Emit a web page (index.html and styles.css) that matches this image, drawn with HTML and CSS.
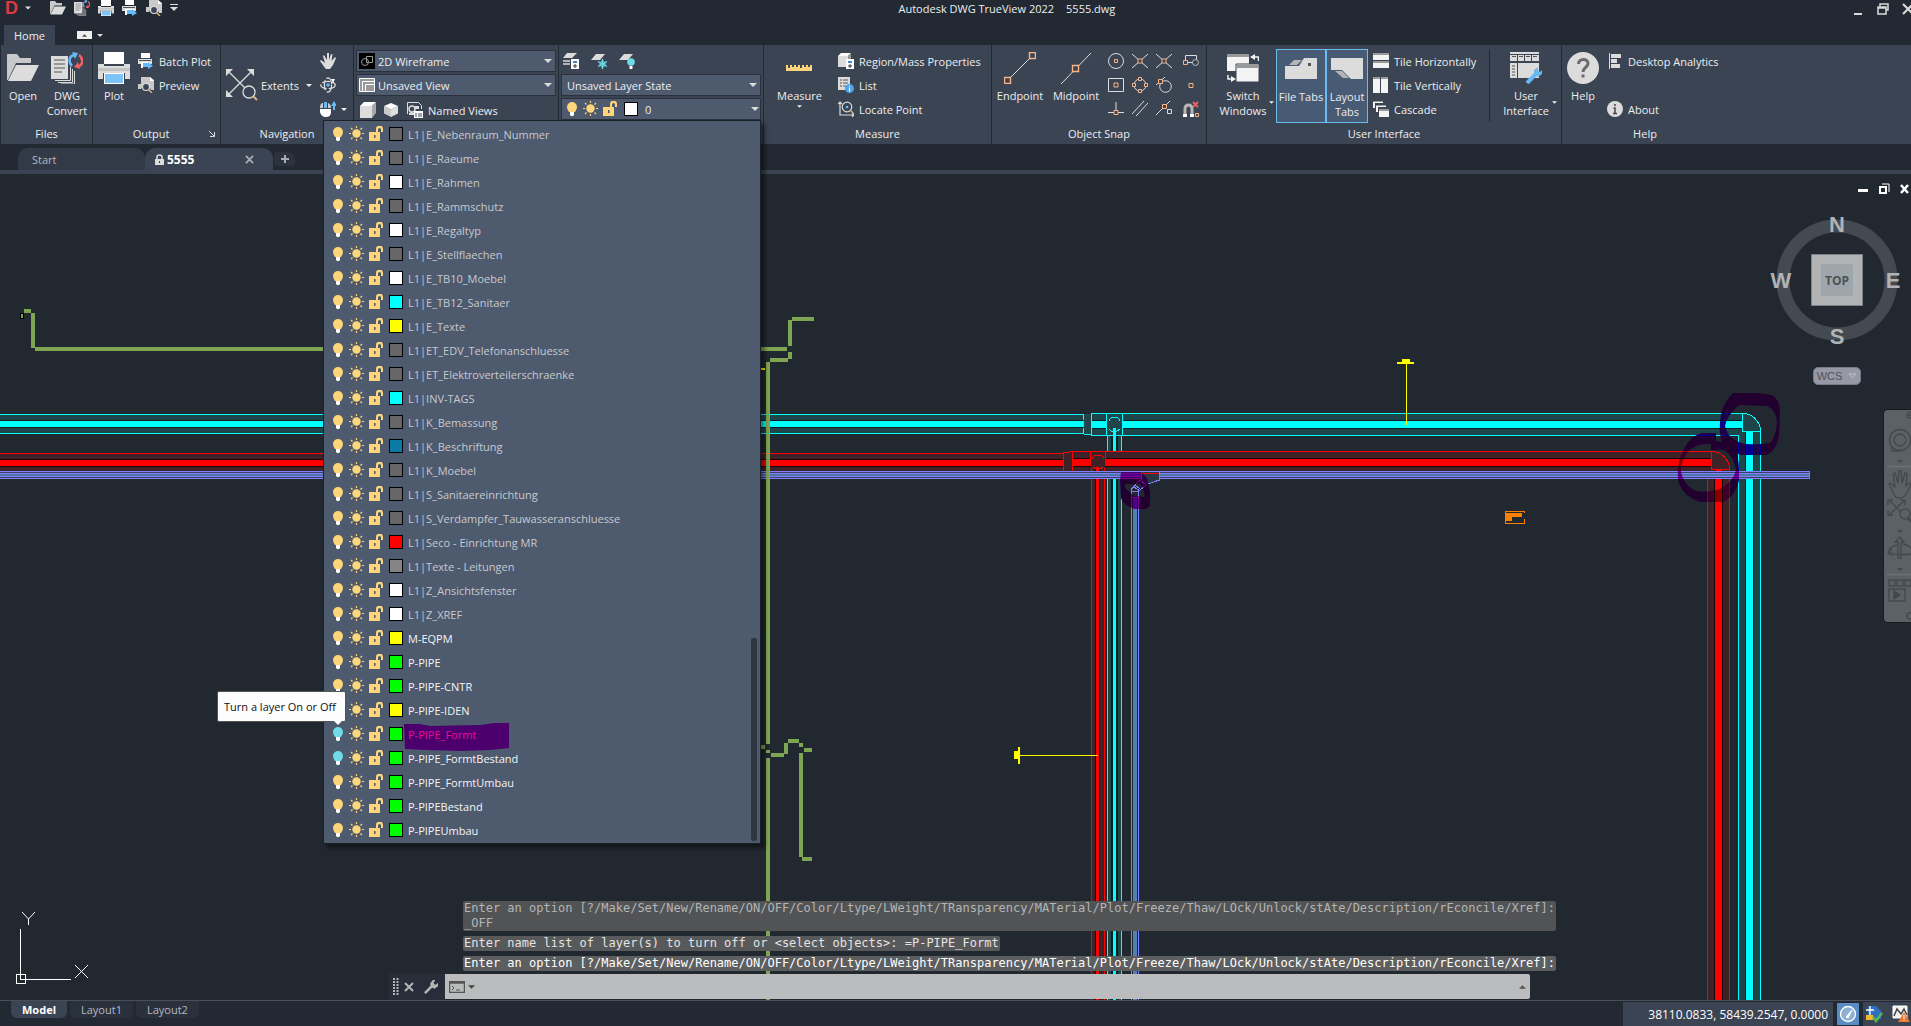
FILE: index.html
```html
<!DOCTYPE html>
<html lang="en">
<head>
<meta charset="utf-8">
<title>Autodesk DWG TrueView 2022 - 5555.dwg</title>
<link rel="stylesheet" href="styles.css">
</head>
<body>
<svg class="defs" aria-hidden="true">
  <symbol id="caret" viewBox="0 0 8 4"><path d="M0 0H8L4 4Z" fill="currentColor"/></symbol>
  <symbol id="bulb" viewBox="0 0 10 14"><path d="M5 0a5 5 0 0 1 5 5c0 2-1 3-2 5H2C1 8 0 7 0 5a5 5 0 0 1 5-5Z" fill="#ffd57b"/><path d="M3 10h4v3l-1 1H4l-1-1Z" fill="#fff"/></symbol>
  <symbol id="bulb-off" viewBox="0 0 10 14"><path d="M5 0a5 5 0 0 1 5 5c0 2-1 3-2 5H2C1 8 0 7 0 5a5 5 0 0 1 5-5Z" fill="#70dcea"/><path d="M3 10h4v3l-1 1H4l-1-1Z" fill="#fff"/></symbol>
  <symbol id="sun" viewBox="0 0 15 15"><circle cx="7.5" cy="7.5" r="4.2" fill="#ffd57b"/><path d="M7.5 0v2M7.5 13v2M0 7.500h2M13 7.500h2M2 2l1.500 1.500M11.500 11.500L13 13M13 2l-1.500 1.500M2 13l1.500-1.500" stroke="#ffd57b" stroke-width="1.200"/></symbol>
  <symbol id="lock" viewBox="0 0 14 15"><path d="M0 6h7V3a3.500 3.500 0 0 1 7 0v3h-2V3.500a1.500 1.500 0 0 0-3 0V6h2v9H0Z" fill="#ffd57b"/><path d="M5 9h1.500v3H5Z" fill="#4e5a6e"/></symbol>
  <symbol id="on" viewBox="0 0 50 16"><use href="#bulb" x="0" y="1" width="10" height="14"/><use href="#sun" x="16" y="0" width="15" height="15"/><use href="#lock" x="36" y="0" width="14" height="15"/></symbol>
  <symbol id="off" viewBox="0 0 50 16"><use href="#bulb-off" x="0" y="1" width="10" height="14"/><use href="#sun" x="16" y="0" width="15" height="15"/><use href="#lock" x="36" y="0" width="14" height="15"/></symbol>
  <symbol id="folder" viewBox="0 0 32 28"><path d="M0 26V1q0-1 1-1h9l3 4h11v5H9L1 26Z" fill="#c9c9c9"/><path d="M9 11h23l-8 16H1Z" fill="#dcdcdc"/></symbol>
  <symbol id="convert" viewBox="0 0 32 32"><path d="M0 4h17v23H0Z" fill="#dcdcdc"/><path d="M3 8h11M3 12h11M3 16h11M3 20h8" stroke="#555" stroke-width="1"/><path d="M4 28.500h15.500V15M7 30.500h14.500V17M10 32h13.500V19" fill="none" stroke="#dcdcdc" stroke-width="1"/><path d="M21 14C17 10 18 4 23 3" fill="none" stroke="#67b9f5" stroke-width="2.500"/><path d="M21 0l6 1-3 6Z" fill="#67b9f5"/><path d="M28 3c5 4 4 10-1 12" fill="none" stroke="#f2605f" stroke-width="2.500"/><path d="M29 17l-6-2 4-5Z" fill="#f2605f"/></symbol>
  <symbol id="printer" viewBox="0 0 32 32"><path d="M6 0h20v12H6Z" fill="#fff"/><path d="M0 12h6v2h20v-2h6v15h-5v-6H5v6H0Z" fill="#dcdcdc"/><path d="M0 16h32v3H0Z" fill="#c3c3c3"/><path d="M6 21h20v11H6Z" fill="#fff"/><path d="M7 22h18v9H7Z" fill="#7cc4f8"/></symbol>
  <symbol id="batch" viewBox="0 0 16 16"><path d="M3 0h9v5H3Z" fill="#fff"/><path d="M0 6h14v5H0Z" fill="#dcdcdc"/><path d="M1 7h12v1H1Z" fill="#555"/><path d="M3 9h9v2H5v4H3Z" fill="#fff"/><path d="M5 10h6v2h-1V9l5 4-5 3v-2H5Z" fill="#67b9f5"/></symbol>
  <symbol id="preview" viewBox="0 0 16 16"><path d="M3 0h9l4 3v10h-3l-3-6-4 0-3 5H0V7h3Z" fill="#c9c9c9"/><path d="M12 0l4 4h-4Z" fill="#fff"/><circle cx="8" cy="10" r="3.500" fill="#3b4453" stroke="#dcdcdc" stroke-width="1.200"/><path d="M10.500 12.500L14 16" stroke="#d9b27a" stroke-width="1.500"/></symbol>
  <symbol id="extents" viewBox="0 0 32 32"><path d="M2 2l24 24M26 2L2 26" stroke="#dcdcdc" stroke-width="1.300"/><path d="M0 0h7L0 7ZM28 0v7l-7-7ZM0 28v-7l7 7Z" fill="#dcdcdc"/><circle cx="23" cy="23" r="6" fill="#3b4453" stroke="#dcdcdc" stroke-width="1.300"/><path d="M27 27l4 4" stroke="#d9b27a" stroke-width="2"/></symbol>
  <symbol id="hand" viewBox="0 0 16 16"><path d="M5 15L0 8l1-1 4 3L3 3l1-1 3 5V0h2v7l2-6 1.500.5L11.500 8 15 4l1 1-3 7-3 4H6Z" fill="#dcdcdc"/></symbol>
  <symbol id="orbit" viewBox="0 0 16 16"><ellipse cx="8" cy="8" rx="7.200" ry="3.600" fill="none" stroke="#dcdcdc" stroke-width="1.300" stroke-dasharray="8 2"/><ellipse cx="8" cy="8" rx="3.600" ry="7.200" fill="none" stroke="#dcdcdc" stroke-width="1.300" stroke-dasharray="10 2"/><path d="M8 6v4M6 8h4" stroke="#67b9f5" stroke-width="1.300"/><path d="M11 2l4 0-2 4Z" fill="#fff"/></symbol>
  <symbol id="mouse" viewBox="0 0 16 16"><path d="M0 8h11v3q0 5-5 5T0 11Z" fill="#fff"/><path d="M0 7q0-5 3-5v5ZM8 2q3 1 3 5H8Z" fill="#c9c9c9"/><path d="M4 1h3v6H4Z" fill="#67b9f5"/><path d="M13 9V5h-2l3-5 3 5h-2v4Z" fill="#67b9f5"/></symbol>
  <symbol id="wire" viewBox="0 0 16 16"><path d="M0 0h16v16H0Z"/><circle cx="6" cy="9" r="3.500" fill="none" stroke="#999"/><path d="M7.500 3.500h6v6h-6Z" fill="none" stroke="#999"/></symbol>
  <symbol id="view" viewBox="0 0 16 14"><path d="M.5.5h15v13H.5Z" fill="#999" stroke="#fff"/><path d="M3.500 13V3.500H15M6.500 13V6.500H15" fill="none" stroke="#fff"/></symbol>
  <symbol id="cube" viewBox="0 0 16 16"><path d="M0 4h12v12H0Z" fill="#dcdcdc"/><path d="M0 4l4-4h12l-4 4Z" fill="#fff"/><path d="M12 4l4-4v11l-4 5Z" fill="#a9a9a9"/></symbol>
  <symbol id="iso" viewBox="0 0 14 14"><path d="M7 0l7 3-7 3.500L0 3Z" fill="#fff"/><path d="M0 3l7 3.500V14L0 10.500Z" fill="#c9c9c9"/><path d="M14 3L7 6.500V14l7-3.500Z" fill="#dfdfdf"/></symbol>
  <symbol id="named" viewBox="0 0 16 16"><path d="M.5 12V.5h11l3 3V7" fill="none" stroke="#dcdcdc"/><circle cx="5" cy="7" r="3" fill="none" stroke="#dcdcdc" stroke-width="1.500"/><path d="M2 11q3-2 5 0v2H2ZM8 4h4v3H8Z" fill="#dcdcdc"/><path d="M7 9h9v7H7Z" fill="#fff"/><path d="M8 12h2M11 12h4M8 14h2M11 14h4" stroke="#3b4453"/></symbol>
  <symbol id="lay1" viewBox="0 0 16 16"><path d="M4 0h10l-5 5H0Z" fill="#dcdcdc"/><path d="M0 8h7M0 11h7" stroke="#dcdcdc" stroke-width="1.500"/><path d="M8 6h8v10H8Z" fill="#fff"/><path d="M10 8h4v2h-4Z" fill="#3b86d0"/><path d="M12 11v4M10 13h4" stroke="#333"/></symbol>
  <symbol id="lay2" viewBox="0 0 16 16"><path d="M5 1h9L9 7H0Z" fill="#dcdcdc"/><path d="M11.500 6v10M7 8.500l9 5M16 8.500l-9 5" stroke="#70dcea" stroke-width="1.400"/><circle cx="11.500" cy="11" r="2.600" fill="none" stroke="#70dcea"/></symbol>
  <symbol id="lay3" viewBox="0 0 16 16"><path d="M5 1h9L9 7H0Z" fill="#dcdcdc"/><circle cx="12" cy="9" r="3.800" fill="#70dcea"/><path d="M10.500 13h3v3h-3Z" fill="#fff"/></symbol>
  <symbol id="ruler" viewBox="0 0 28 6"><path d="M0 0h2v3h2V0h2v2h2V0h2v2h2V0h2v3h2V0h2v2h2V0h2v2h2V0h2v6H0Z" fill="#ffd57b"/></symbol>
  <symbol id="region" viewBox="0 0 16 16"><path d="M0 3h10v11H0Z" fill="#dcdcdc"/><path d="M0 3l3-3h10l-3 3Z" fill="#fff"/><path d="M10 3l3-3v6h-3Z" fill="#999"/><path d="M8 6h8v10H8Z" fill="#fff"/><path d="M10 8h4v2h-4Z" fill="#3b86d0"/><path d="M12 11v4M10 13h4" stroke="#333"/></symbol>
  <symbol id="list" viewBox="0 0 16 16"><path d="M0 0h12v13H0Z" fill="#dcdcdc"/><path d="M2 3h2M5 3h5M2 6h2M5 6h5M2 9h2M5 9h3" stroke="#555"/><circle cx="11.500" cy="11.500" r="4.500" fill="#4da3e8"/><path d="M11.500 8.500v1M11.500 10.500v4" stroke="#fff" stroke-width="1.200"/></symbol>
  <symbol id="locate" viewBox="0 0 16 16"><path d="M2 1v13h14M0 3l2-2 2 2M14 12l2 2-2 2" fill="none" stroke="#dcdcdc" stroke-width="1.200"/><circle cx="9" cy="6" r="4.800" fill="none" stroke="#dcdcdc" stroke-width="1.200"/><circle cx="9" cy="6" r="1.300" fill="#67b9f5"/><path d="M12.500 9.500l3 3" stroke="#d9b27a" stroke-width="1.500"/></symbol>
  <symbol id="endp" viewBox="0 0 32 32"><path d="M4 28L28 4" stroke="#dcdcdc"/><path d="M.5 25.500h6v6h-6ZM25.500.5h6v6h-6Z" fill="#3b4453" stroke="#f9b487" stroke-width="1.400"/></symbol>
  <symbol id="midp" viewBox="0 0 32 32"><path d="M1 32L31 1" stroke="#dcdcdc"/><path d="M12.500 13.500h6v6h-6Z" fill="#3b4453" stroke="#f9b487" stroke-width="1.400"/></symbol>
  <symbol id="s1" viewBox="0 0 16 16"><circle cx="8" cy="8" r="7.500" fill="none" stroke="#dcdcdc"/><path d="M6.500 6.500h3v3h-3Z" fill="none" stroke="#f9b487"/></symbol>
  <symbol id="s2" viewBox="0 0 16 16"><path d="M0 1l16 14M16 1L0 15" stroke="#dcdcdc"/><path d="M6 6h4v4H6Z" fill="#3b4453" stroke="#f9b487"/></symbol>
  <symbol id="s4" viewBox="0 0 16 16"><path d="M2.500 7V2.500h11V7M4 9.500h6" fill="none" stroke="#dcdcdc"/><circle cx="12.500" cy="9.500" r="3" fill="none" stroke="#bbb"/><path d="M.5 7.500h4v4h-4Z" fill="#3b4453" stroke="#f9b487"/></symbol>
  <symbol id="s5" viewBox="0 0 16 16"><path d="M.5 1.500h15v13H.5Z" fill="none" stroke="#dcdcdc"/><path d="M6 6h4v4H6Z" fill="none" stroke="#f9b487"/></symbol>
  <symbol id="s6" viewBox="0 0 16 16"><circle cx="8" cy="8" r="6" fill="none" stroke="#dcdcdc"/><path d="M6.500.5h3v3h-3ZM6.500 12.500h3v3h-3ZM.5 6.500h3v3h-3ZM12.500 6.500h3v3h-3Z" fill="#3b4453" stroke="#f9b487"/></symbol>
  <symbol id="s7" viewBox="0 0 16 16"><circle cx="9.500" cy="9.500" r="5.800" fill="none" stroke="#dcdcdc"/><path d="M0 8L9 0" stroke="#dcdcdc"/><path d="M2.500 2.500h4v4h-4Z" fill="#3b4453" stroke="#f9b487"/></symbol>
  <symbol id="s8" viewBox="0 0 16 16"><path d="M6 6.500h4v4H6Z" fill="none" stroke="#f9b487"/></symbol>
  <symbol id="s9" viewBox="0 0 16 16"><path d="M8 1v9M0 11.500h16" stroke="#dcdcdc"/><path d="M6 9.500h4v4H6Z" fill="#3b4453" stroke="#f9b487"/></symbol>
  <symbol id="s10" viewBox="0 0 16 16"><path d="M0 13L12 0M4 15L16 2" stroke="#dcdcdc"/></symbol>
  <symbol id="s11" viewBox="0 0 16 16"><path d="M0 14L14 0" stroke="#dcdcdc"/><path d="M6.500 3.500h4v4h-4Z" fill="#3b4453" stroke="#f9b487"/><path d="M11.500 8.500h4v4h-4Z" fill="none" stroke="#dcdcdc"/></symbol>
  <symbol id="s12" viewBox="0 0 16 16"><path d="M2 15V8q0-4 3.500-4T9 8v7" fill="none" stroke="#b5b5b5" stroke-width="3"/><path d="M0 13h4v3H0ZM7 13h4v3H7Z" fill="#fff"/><path d="M10 1l5 5M15 1l-5 5" stroke="#f2605f" stroke-width="1.800"/><path d="M12.500 12.500h3v3h-3Z" fill="none" stroke="#f9b487"/></symbol>
  <symbol id="switch" viewBox="0 0 32 32"><path d="M0 2h22v17H0Z" fill="#f4f4f4"/><path d="M0 2h22v3H0Z" fill="#999"/><path d="M9 12h23v18H9Z" fill="#f4f4f4" stroke="#3b4453"/><path d="M10 13h22v3H10Z" fill="#999"/><path d="M31.500 9V5H27M1 23v4h4" fill="none" stroke="#f4f4f4" stroke-width="1.500"/><path d="M28 2v6l-5-3ZM4 24v6l5-3Z" fill="#f4f4f4"/></symbol>
  <symbol id="ftab" viewBox="0 0 32 21"><path d="M0 8h14l5-8h13v21H0Z" fill="#dcdcdc"/><path d="M4 7l5-5h8l-5 5Z" fill="#b5b5b5"/><path d="M23 5h3v3h-3Z" fill="#555"/></symbol>
  <symbol id="ltab" viewBox="0 0 32 21"><path d="M0 0h32v21H20L11 12H0Z" fill="#dcdcdc"/><path d="M4 13h7l7 7h-6Z" fill="#b5b5b5"/></symbol>
  <symbol id="tileh" viewBox="0 0 16 16"><path d="M0 0h16v7H0ZM0 8h16v7H0Z" fill="#f4f4f4"/><path d="M0 0h16v2H0ZM0 8h16v2H0Z" fill="#999"/></symbol>
  <symbol id="tilev" viewBox="0 0 16 16"><path d="M0 0h7v16H0ZM8 0h7v16H8Z" fill="#f4f4f4"/><path d="M0 0h7v2H0ZM8 0h7v2H8Z" fill="#999"/></symbol>
  <symbol id="casc" viewBox="0 0 16 16"><path d="M0 0h10v2H2v5H0ZM3 4h10v2H5v5H3Z" fill="#f4f4f4"/><path d="M0 0h10v1H0ZM3 4h10v1H3Z" fill="#999"/><path d="M6 8h10v8H6Z" fill="#f4f4f4"/><path d="M6 8h10v2H6Z" fill="#999"/></symbol>
  <symbol id="ui" viewBox="0 0 32 32"><path d="M0 0h29v2H0ZM0 3h29v6H0ZM0 11h7v15H0ZM8 11h21v15H8Z" fill="#dcdcdc"/><path d="M7.500 3v6M14.500 3v6M21.500 3v6" stroke="#3b4453"/><path d="M2 4.500h4M9 4.500h4M16 4.500h4M23 4.500h4M2 14h3M2 17h3M2 20h3M2 23h3" stroke="#555"/><path d="M17 31L27 21" stroke="#67b9f5" stroke-width="4"/><path d="M24 22v-4l4-3v4l2 1 2-2v4l-4 3Z" fill="#67b9f5"/></symbol>
  <symbol id="help" viewBox="0 0 32 32"><circle cx="16" cy="16" r="16" fill="#dcdcdc"/><path d="M11.500 12c0-6 9.500-6 9.500-.5 0 4-5 4-5 8.500M16 22.500v3" fill="none" stroke="#6a6a6a" stroke-width="3"/></symbol>
  <symbol id="desk" viewBox="0 0 16 16"><path d="M2.500 0v16" stroke="#dcdcdc"/><path d="M4 1h10v4H4ZM4 6h6v4H4ZM4 11h9v4H4Z" fill="#dcdcdc"/></symbol>
  <symbol id="about" viewBox="0 0 16 16"><circle cx="8" cy="8" r="8" fill="#dcdcdc"/><path d="M8 3v2M6.500 7H8v5M6 12.500h4" fill="none" stroke="#444" stroke-width="1.500"/></symbol>
  <symbol id="wrench" viewBox="0 0 16 16"><path d="M1 15L9 7" stroke="currentColor" stroke-width="3"/><path d="M8 8L7 4l3-4h3l-2 3 1 2 2 0 2-2v4l-4 3Z" fill="currentColor"/></symbol>
  <symbol id="x" viewBox="0 0 10 10"><path d="M1 1l8 8M9 1L1 9" stroke="currentColor" stroke-width="2"/></symbol>
</svg>

<header class="titlebar">
  <div class="quick">
    <button class="logo" aria-label="Application menu">D<svg width="6" height="4"><use href="#caret"/></svg></button>
    <button aria-label="Open"><svg width="16" height="14"><use href="#folder"/></svg></button>
    <button aria-label="DWG Convert"><svg width="16" height="16"><use href="#convert"/></svg></button>
    <button aria-label="Plot"><svg width="16" height="16"><use href="#printer"/></svg></button>
    <button aria-label="Batch Plot"><svg width="16" height="16"><use href="#batch"/></svg></button>
    <button aria-label="Plot Preview"><svg width="16" height="16"><use href="#preview"/></svg></button>
    <button class="more" aria-label="Customize"><svg width="8" height="8" viewBox="0 0 8 8"><path d="M0 0h8v1H0ZM0 3h8L4 7Z" fill="#dcdcdc"/></svg></button>
  </div>
  <p class="apptitle"><span>Autodesk DWG TrueView 2022</span><span>5555.dwg</span></p>
  <div class="winctl">
    <button aria-label="Minimize"><svg width="12" height="12" viewBox="0 0 12 12"><path d="M2 10h8v2H2Z" fill="#dcdcdc"/></svg></button>
    <button aria-label="Restore"><svg width="12" height="12" viewBox="0 0 12 12"><path d="M3 3V1h8v6H9M1 4h8v7H1ZM1 5h8" fill="none" stroke="#dcdcdc" stroke-width="1.500"/></svg></button>
    <button aria-label="Close"><svg width="12" height="12" viewBox="0 0 12 12"><path d="M1 1l10 10M11 1L1 11" stroke="#dcdcdc" stroke-width="2"/></svg></button>
  </div>
</header>

<nav class="tabrow">
  <button class="home">Home</button>
  <button class="mini" aria-label="Minimize ribbon"><svg width="5" height="3" viewBox="0 0 6 3"><path d="M0 3h6L3 0Z" fill="#444"/></svg></button>
  <svg width="6" height="3"><use href="#caret"/></svg>
</nav>

<section class="ribbon">
  <div class="panel p-files">
    <div class="body">
      <button class="big"><svg width="32" height="32" viewBox="0 -2 32 32"><use href="#folder" width="32" height="28"/></svg>Open</button>
      <button class="big"><svg width="32" height="32"><use href="#convert"/></svg>DWG<br>Convert</button>
    </div>
    <h2>Files</h2>
  </div>
  <div class="panel p-output">
    <div class="body">
      <button class="big"><svg width="32" height="32"><use href="#printer"/></svg>Plot</button>
      <div class="col">
        <button class="small"><svg width="16" height="16"><use href="#batch"/></svg>Batch Plot</button>
        <button class="small"><svg width="16" height="16"><use href="#preview"/></svg>Preview</button>
      </div>
    </div>
    <h2><span>Output</span><svg width="6" height="6" viewBox="0 0 6 6"><path d="M0 0l5 5M5.500 1v4.500H1" fill="none" stroke="#dcdcdc"/></svg></h2>
  </div>
  <div class="panel p-nav">
    <div class="body">
      <button class="ext"><svg width="32" height="32"><use href="#extents"/></svg>Extents<svg class="crt" width="6" height="3"><use href="#caret"/></svg></button>
      <div class="col end">
        <button class="small" aria-label="Pan"><svg width="16" height="16"><use href="#hand"/></svg></button>
        <button class="small" aria-label="Orbit"><svg width="16" height="16"><use href="#orbit"/></svg></button>
        <button class="small" aria-label="Mouse"><svg width="16" height="16"><use href="#mouse"/></svg><svg width="6" height="3"><use href="#caret"/></svg></button>
      </div>
    </div>
    <h2>Navigation</h2>
  </div>
  <div class="panel p-view">
    <div class="stack">
      <div class="combo"><svg width="16" height="16"><use href="#wire"/></svg><select aria-label="Visual style"><option>2D Wireframe</option></select><svg class="dd" width="8" height="4"><use href="#caret"/></svg></div>
      <div class="combo"><svg width="16" height="14"><use href="#view"/></svg><select aria-label="View"><option>Unsaved View</option></select><svg class="dd" width="8" height="4"><use href="#caret"/></svg></div>
      <div class="tools">
        <button aria-label="Top view"><svg width="16" height="16"><use href="#cube"/></svg></button>
        <button aria-label="Isometric view"><svg width="14" height="14"><use href="#iso"/></svg></button>
        <button class="small"><svg width="16" height="16"><use href="#named"/></svg>Named Views</button>
      </div>
    </div>
  </div>
  <div class="panel p-layers">
    <div class="stack">
      <div class="tools lay">
        <button aria-label="Layer properties"><svg width="16" height="16"><use href="#lay1"/></svg></button>
        <button aria-label="Layer freeze"><svg width="16" height="16"><use href="#lay2"/></svg></button>
        <button aria-label="Layer off"><svg width="16" height="16"><use href="#lay3"/></svg></button>
      </div>
      <div class="combo plain"><select aria-label="Layer state"><option>Unsaved Layer State</option></select><svg class="dd" width="8" height="4"><use href="#caret"/></svg></div>
      <div class="layerbox">
        <button class="combo current" aria-haspopup="listbox" aria-expanded="true"><svg width="50" height="16"><use href="#on"/></svg><i class="sw white"></i><span>0</span><svg class="dd" width="8" height="4"><use href="#caret"/></svg></button>
        <ul class="layers">
          <li><svg><use href="#on"/></svg><i class="sw"></i><span>L1|E_Nebenraum_Nummer</span></li>
          <li><svg><use href="#on"/></svg><i class="sw"></i><span>L1|E_Raeume</span></li>
          <li><svg><use href="#on"/></svg><i class="sw white"></i><span>L1|E_Rahmen</span></li>
          <li><svg><use href="#on"/></svg><i class="sw"></i><span>L1|E_Rammschutz</span></li>
          <li><svg><use href="#on"/></svg><i class="sw white"></i><span>L1|E_Regaltyp</span></li>
          <li><svg><use href="#on"/></svg><i class="sw"></i><span>L1|E_Stellflaechen</span></li>
          <li><svg><use href="#on"/></svg><i class="sw white"></i><span>L1|E_TB10_Moebel</span></li>
          <li><svg><use href="#on"/></svg><i class="sw cyan"></i><span>L1|E_TB12_Sanitaer</span></li>
          <li><svg><use href="#on"/></svg><i class="sw yellow"></i><span>L1|E_Texte</span></li>
          <li><svg><use href="#on"/></svg><i class="sw"></i><span>L1|ET_EDV_Telefonanschluesse</span></li>
          <li><svg><use href="#on"/></svg><i class="sw"></i><span>L1|ET_Elektroverteilerschraenke</span></li>
          <li><svg><use href="#on"/></svg><i class="sw cyan"></i><span>L1|INV-TAGS</span></li>
          <li><svg><use href="#on"/></svg><i class="sw"></i><span>L1|K_Bemassung</span></li>
          <li><svg><use href="#on"/></svg><i class="sw blue"></i><span>L1|K_Beschriftung</span></li>
          <li><svg><use href="#on"/></svg><i class="sw"></i><span>L1|K_Moebel</span></li>
          <li><svg><use href="#on"/></svg><i class="sw"></i><span>L1|S_Sanitaereinrichtung</span></li>
          <li><svg><use href="#on"/></svg><i class="sw"></i><span>L1|S_Verdampfer_Tauwasseranschluesse</span></li>
          <li><svg><use href="#on"/></svg><i class="sw red"></i><span>L1|Seco - Einrichtung MR</span></li>
          <li><svg><use href="#on"/></svg><i class="sw gray"></i><span>L1|Texte - Leitungen</span></li>
          <li><svg><use href="#on"/></svg><i class="sw white"></i><span>L1|Z_Ansichtsfenster</span></li>
          <li><svg><use href="#on"/></svg><i class="sw white"></i><span>L1|Z_XREF</span></li>
          <li class="own"><svg><use href="#on"/></svg><i class="sw yellow"></i><span>M-EQPM</span></li>
          <li class="own"><svg><use href="#on"/></svg><i class="sw green"></i><span>P-PIPE</span></li>
          <li class="own"><svg><use href="#on"/></svg><i class="sw green"></i><span>P-PIPE-CNTR</span></li>
          <li class="own"><svg><use href="#on"/></svg><i class="sw yellow"></i><span>P-PIPE-IDEN</span></li>
          <li class="own marked"><svg><use href="#off"/></svg><i class="sw green"></i><svg class="marker" viewBox="0 0 106 28"><path d="M0 1L16 1 26 3 77 2 90 0 105 0V25L86 27 56 28 22 27 1 26Z" fill="#4b006e"/></svg><span>P-PIPE_Formt</span><div class="tip" role="tooltip">Turn a layer On or Off</div></li>
          <li class="own"><svg><use href="#off"/></svg><i class="sw green"></i><span>P-PIPE_FormtBestand</span></li>
          <li class="own"><svg><use href="#on"/></svg><i class="sw green"></i><span>P-PIPE_FormtUmbau</span></li>
          <li class="own"><svg><use href="#on"/></svg><i class="sw green"></i><span>P-PIPEBestand</span></li>
          <li class="own"><svg><use href="#on"/></svg><i class="sw green"></i><span>P-PIPEUmbau</span></li>
        </ul>
      </div>
    </div>
  </div>
  <div class="panel p-measure">
    <div class="body">
      <button class="big"><svg width="28" height="32" viewBox="0 0 28 32"><use href="#ruler" y="13" width="28" height="6"/></svg>Measure<svg width="5" height="3"><use href="#caret"/></svg></button>
      <div class="col">
        <button class="small"><svg width="16" height="16"><use href="#region"/></svg>Region/Mass Properties</button>
        <button class="small"><svg width="16" height="16"><use href="#list"/></svg>List</button>
        <button class="small"><svg width="16" height="16"><use href="#locate"/></svg>Locate Point</button>
      </div>
    </div>
    <h2>Measure</h2>
  </div>
  <div class="panel p-snap">
    <div class="body">
      <button class="big"><svg width="32" height="32"><use href="#endp"/></svg>Endpoint</button>
      <button class="big"><svg width="32" height="32"><use href="#midp"/></svg>Midpoint</button>
      <div class="snaps">
        <button aria-label="Center"><svg><use href="#s1"/></svg></button>
        <button aria-label="Intersection"><svg><use href="#s2"/></svg></button>
        <button aria-label="Apparent intersection"><svg><use href="#s2"/></svg></button>
        <button aria-label="Insert"><svg><use href="#s4"/></svg></button>
        <button aria-label="Geometric center"><svg><use href="#s5"/></svg></button>
        <button aria-label="Quadrant"><svg><use href="#s6"/></svg></button>
        <button aria-label="Tangent"><svg><use href="#s7"/></svg></button>
        <button aria-label="Node"><svg><use href="#s8"/></svg></button>
        <button aria-label="Perpendicular"><svg><use href="#s9"/></svg></button>
        <button aria-label="Parallel"><svg><use href="#s10"/></svg></button>
        <button aria-label="Nearest"><svg><use href="#s11"/></svg></button>
        <button aria-label="Snap none"><svg><use href="#s12"/></svg></button>
      </div>
    </div>
    <h2>Object Snap</h2>
  </div>
  <div class="panel p-ui">
    <div class="body">
      <button class="big drop"><svg width="32" height="32"><use href="#switch"/></svg>Switch<br>Windows<svg class="crt" width="5" height="3"><use href="#caret"/></svg></button>
      <button class="big tog wide" aria-pressed="true"><svg width="32" height="32" viewBox="0 -5 32 32"><use href="#ftab" width="32" height="21"/></svg>File Tabs</button>
      <button class="big tog" aria-pressed="true"><svg width="32" height="32" viewBox="0 -5 32 32"><use href="#ltab" width="32" height="21"/></svg>Layout<br>Tabs</button>
      <div class="col ruled">
        <button class="small"><svg width="16" height="16"><use href="#tileh"/></svg>Tile Horizontally</button>
        <button class="small"><svg width="16" height="16"><use href="#tilev"/></svg>Tile Vertically</button>
        <button class="small"><svg width="16" height="16"><use href="#casc"/></svg>Cascade</button>
      </div>
      <button class="big drop"><svg width="32" height="32"><use href="#ui"/></svg>User<br>Interface<svg class="crt" width="5" height="3"><use href="#caret"/></svg></button>
    </div>
    <h2>User Interface</h2>
  </div>
  <div class="panel p-help">
    <div class="body">
      <button class="big"><svg width="32" height="32"><use href="#help"/></svg>Help</button>
      <div class="col spread">
        <button class="small"><svg width="16" height="16"><use href="#desk"/></svg>Desktop Analytics</button>
        <button class="small"><svg width="16" height="16"><use href="#about"/></svg>About</button>
      </div>
    </div>
    <h2>Help</h2>
  </div>
</section>

<nav class="doctabs">
  <button class="dtab start">Start</button>
  <button class="dtab active"><svg width="9" height="11" viewBox="0 0 9 11"><path d="M0 5h9v6H0Z" fill="#dcdcdc"/><path d="M2 5V3q0-2 2.500-2T7 3v2" fill="none" stroke="#dcdcdc" stroke-width="1.500"/><path d="M4 7h1v2H4Z" fill="#3b4453"/></svg><b>5555</b><svg class="cls" width="9" height="9"><use href="#x"/></svg></button>
  <button class="plus" aria-label="New tab"><svg width="8" height="8" viewBox="0 0 8 8"><path d="M4 0v8M0 4h8" stroke="#a9adb3" stroke-width="2"/></svg></button>
</nav>

<main class="canvas">
  <svg class="drawing" aria-label="Pipe drawing">
    <g transform="translate(0 -174)" shape-rendering="crispEdges">
      <!-- supply pipe -->
      <g fill="#1e4549">
        <path d="M0 414H1084V434H0ZM1084 414H1091V435H1084ZM1091 413H1742V436H1091ZM1107 435H1122V1000H1107ZM1738 431H1761V1000H1738Z"/>
        <path d="M1742 413A18 18 0 0 1 1760 431H1742Z"/>
      </g>
      <path d="M0 420H1084V428H0ZM1091 420H1742V429H1091ZM1111 429H1118V1000H1111ZM1745 431H1754V1000H1745Z" fill="#0c1f23"/>
      <path d="M0 421H1084V427H0ZM1091 421H1742V428H1091ZM1113 428H1116V1000H1113ZM1746 431H1753V1000H1746Z" fill="#0ff"/>
      <path d="M1106 414H1122V435H1106Z" fill="#1e4549"/>
      <path d="M1113 428H1116V436H1113Z" fill="#0ff"/>
      <g fill="none" stroke="#0ff">
        <path d="M0 414.500H1083.500V420M0 433.500H1083.500V428M1083.500 434L1091.500 435M1742 413.500H1091.500V435.500H1738.500V1000M1742.500 413V431.500H1760.500V1000M1106.500 413V435M1122.500 413V435M1107.500 435V1000M1121.500 435V1000"/>
        <path d="M1742 413.500A18 18 0 0 1 1760.500 431M1109 421q1-4 5.500-4t5.500 4M1109 429q2 3 5 3t6-3"/>
      </g>
      <!-- return pipe -->
      <g fill="#3f2228">
        <path d="M0 453H1064V472H0ZM1064 452H1072V472H1064ZM1072 451H1711V473H1072ZM1091 472H1105V1000H1091ZM1707 469H1730V1000H1707Z"/>
        <path d="M1711 451A18 18 0 0 1 1729 469H1711Z"/>
      </g>
      <path d="M0 459H1064V467H0ZM1072 458H1711V467H1072ZM1095 468H1100V1000H1095ZM1714 469H1723V1000H1714Z" fill="#1a0508"/>
      <path d="M0 460H1064V466H0ZM1072 459H1711V466H1072ZM1715 469H1722V1000H1715Z" fill="#f00"/>
      <path d="M1091 452H1105V468H1091Z" fill="#3f2228"/>
      <path d="M1096 467H1099V1000H1096Z" fill="#f00"/>
      <g fill="none" stroke="#f00">
        <path d="M0 453.500H1063.500V460M1063.500 466V472M1063.500 453L1072 451.500M1072.500 472V451.500H1711.500V469.500H1729.500V1000M1707.500 473V1000M1072 473.500H1707M1090.500 451V459M1105.500 451V459M1091.500 468V1000M1104.500 468V1000"/>
        <path d="M1711 451.500A18 18 0 0 1 1729.500 469M1092 459q1-4 6-4t6 4M1093 467q2 2 5 2t5-2"/>
      </g>
      <!-- condensate pipe -->
      <path d="M0 472H1141V478H0ZM1159 472H1809V478H1159Z" fill="#38406a"/>
      <path d="M0 474H1141V476H0ZM1159 474H1809V476H1159Z" fill="#4f74a8"/>
      <path d="M1133 497H1137V1000H1133Z" fill="#5080b0"/>
      <path d="M1141 472H1159V480L1148 484H1141Z" fill="#2a3745"/>
      <g fill="none" stroke="#8080ff">
        <path d="M0 471.500H1809.500V478.500H1159M0 473.500H1141M1159 473.500H1809M0 476.500H1141M1159 476.500H1809M0 478.500H1141M1141.500 471V480M1159.500 471V480L1148 484M1131.500 1000V491.500H1138.500V1000M1132 491L1131.500 489L1140 480L1146 485L1139 491M1134 487L1140 491"/>
        <path d="M1131 497.500H1139M1135 485L1140 489"/>
      </g>
      <path d="M1141 473.500H1159" stroke="#f00"/>
      <!-- electrical line -->
      <g fill="#7ea552">
        <path d="M24 309H31V313H24ZM31 313H35V348H31ZM35 347H324V351H35ZM761 347H787V351H761ZM792 317H814V321H792ZM788 320H792V346H788ZM788 352H792V359H788ZM770 358H788V362H770Z"/>
        <path d="M766 362H770V744H766ZM766 750H770V753H766ZM766 758H770V1000H766ZM761 745H765V749H761ZM771 753H784V757H771ZM784 743H788V754H784ZM788 739H799V743H788ZM799 743H803V747H799ZM804 748H812V752H804ZM799 753H803V857H799ZM802 857H812V861H802Z"/>
        <path d="M20.500 313.500H23.500V318.500H20.500Z" stroke="#000"/>
      </g>
      <!-- tags -->
      <path d="M761 368H765V370H761ZM1397 362H1414V364H1397ZM1402 359H1410V362H1402ZM1406 364H1407V425H1406ZM1018 747H1020V764H1018ZM1014 751H1018V759H1014ZM1020 755H1098V756H1020Z" fill="#ff0"/>
      <path d="M1506 513H1522V517H1512V521H1506Z" fill="#ff8000"/>
      <path d="M1524.500 513V511.500H1505.500V523.500H1524.500V519" fill="none" stroke="#ff8000"/>
      <!-- coordinate axes -->
      <path d="M16.500 974.500H25.500V983.500H16.500ZM20.500 929V979.500H71" fill="none" stroke="#fff"/>
      <path d="M22 912L28.500 919L35 912M28.500 919V925M75 965L88 978M88 965L75 978" fill="none" stroke="#fff" shape-rendering="auto"/>
    </g>
    <!-- hand-drawn circles -->
    <g transform="translate(0 -174)" class="ink">
      <path fill-rule="evenodd" d="M1733 393H1757L1772 395Q1780 400 1780 412L1779 435Q1776 452 1766 455H1740L1722 443Q1718 430 1721 415Q1723 403 1733 393ZM1739 405L1767 406Q1776 410 1777 422Q1776 436 1771 442Q1768 445 1745 444Q1728 440 1725 426Q1727 415 1739 405Z"/>
      <path fill-rule="evenodd" d="M1702 433H1716V441L1733 444Q1740 456 1739 480Q1735 498 1722 502H1700Q1682 496 1678 480Q1676 462 1685 447Q1692 435 1702 433ZM1711 444Q1695 443 1688 452Q1680 462 1681 472Q1684 486 1696 491Q1706 493 1720 489Q1733 482 1736 470Q1734 456 1724 450H1711Z"/>
      <path fill-rule="evenodd" d="M1121 472L1141 472L1147 478L1150 492V506L1146 509H1134Q1122 504 1121 498L1120 480ZM1126 484Q1123 487 1126 489L1134 496L1145 497L1143 488L1140 484Z"/>
    </g>
  </svg>

  <div class="docctl">
    <button aria-label="Minimize drawing"><svg width="12" height="12" viewBox="0 0 12 12"><path d="M1 6h10v3H1Z" fill="#fff"/></svg></button>
    <button aria-label="Restore drawing"><svg width="12" height="12" viewBox="0 0 12 12"><path d="M4 1h7v8" fill="none" stroke="#fff"/><path d="M2 4h6v6H2Z" fill="none" stroke="#fff" stroke-width="2"/></svg></button>
    <button aria-label="Close drawing"><svg width="12" height="12" viewBox="0 0 12 12"><path d="M2 2l7 8M9 2L2 10" stroke="#fff" stroke-width="2.500"/></svg></button>
  </div>

  <svg class="viewcube" viewBox="0 -10 140 156" aria-label="View cube">
    <circle cx="70" cy="66" r="54" fill="none" stroke="#444a50" stroke-width="13"/>
    <path d="M44.500 40.500H95.500V91.500H44.500Z" fill="#b1b3b4" stroke="#7f8386"/>
    <path d="M54 50H86V82H54Z" fill="#9fa6ab"/>
    <g text-anchor="middle" class="pts"><text x="70" y="18">N</text><text x="70" y="130">S</text><text x="14" y="74">W</text><text x="126" y="74">E</text></g>
    <text x="70" y="71" text-anchor="middle" class="top">TOP</text>
  </svg>
  <button class="wcs">WCS<svg width="9" height="6" viewBox="0 0 9 6"><path d="M1 1h7L4.500 5Z" fill="none" stroke="#bcbec8"/></svg></button>

  <div class="navbar">
    <svg width="28" height="212" viewBox="0 0 28 212" fill="none" stroke="#42484e" stroke-width="1.300">
      <circle cx="26" cy="5" r="3"/><path d="M24 5h4"/>
      <circle cx="16" cy="30" r="10.500"/><circle cx="16" cy="30" r="6"/><path d="M8 37v4h8"/>
      <path d="M13 50h6L16 53ZM13 120h6l-3 3ZM13 158h6l-3 3Z" fill="#42484e" stroke="none"/>
      <path d="M3 56.500H28M3 164.500H28" stroke="#6d7277"/>
      <path d="M9 82L5 74l2-1 4 4L9 64l2-1 3 10 1-12h2l1 12 3-10 2 1-1 12 3-3 2 1-4 9q-3 5-8 5T9 82Z"/>
      <path d="M5 90l16 16M21 90L5 105M4 95v-5h5M16 90h5v5M4 100v5h5"/><circle cx="21" cy="104" r="5" fill="#5c6166"/><path d="M24 108l4 4" stroke-width="2.500"/>
      <path d="M14 148V132h-3l5-5 4 5h-3v16Z"/><path d="M13 135Q5 137 5 141q3 5 22 3M8 139l-4 4 5 3M19 134q6 1 9 5"/>
      <path d="M5 170h6v6H5ZM13 170h6v6h-6ZM21 170h6v6h-6ZM5 179h16v12H5Z"/><path d="M10 181v8l6-4Z" fill="#42484e"/>
      <circle cx="26" cy="206" r="3"/>
    </svg>
  </div>

  <div class="cmd">
    <div class="hist">
      <p class="old">Enter an option [?/Make/Set/New/Rename/ON/OFF/Color/Ltype/LWeight/TRansparency/MATerial/Plot/Freeze/Thaw/LOck/Unlock/stAte/Description/rEconcile/Xref]:<br>_OFF</p>
      <p class="mid">Enter name list of layer(s) to turn off or &lt;select objects&gt;: =P-PIPE_Formt</p>
      <p>Enter an option [?/Make/Set/New/Rename/ON/OFF/Color/Ltype/LWeight/TRansparency/MATerial/Plot/Freeze/Thaw/LOck/Unlock/stAte/Description/rEconcile/Xref]:</p>
    </div>
    <div class="cmdbar">
      <div class="grip">
        <svg width="6" height="18" viewBox="0 0 6 18"><path d="M1 0V18M4.500 0V18" stroke="#b5b5b5" stroke-width="2" stroke-dasharray="2 1"/></svg>
        <button aria-label="Close command line"><svg width="10" height="10"><use href="#x"/></svg></button>
        <button aria-label="Customize"><svg width="14" height="14"><use href="#wrench"/></svg></button>
      </div>
      <div class="entry">
        <svg width="16" height="12" viewBox="0 0 16 12"><path d="M.5.5h15v11H.5ZM0 2h16" fill="none" stroke="#555" stroke-width="1.500"/><path d="M3 5l2 2-2 2M7 9h4" fill="none" stroke="#555"/></svg>
        <svg width="7" height="4"><use href="#caret"/></svg>
        <input type="text" aria-label="Command">
        <svg width="7" height="4" viewBox="0 0 8 4"><path d="M0 4h8L4 0Z" fill="#555"/></svg>
      </div>
    </div>
  </div>
</main>

<footer class="status">
  <div class="ltabs">
    <button class="sel">Model</button><button>Layout1</button><button>Layout2</button>
  </div>
  <output class="coords">38110.0833, 58439.2547, 0.0000</output>
  <button class="hw" aria-label="Hardware acceleration"><svg width="18" height="18" viewBox="0 0 18 18"><circle cx="9" cy="9" r="7.500" fill="#8fb0d6" stroke="#fff" stroke-width="1.300"/><path d="M7 12l6-7-4 8Z" fill="#fff" stroke="#fff"/></svg></button>
  <div class="tray">
    <button aria-label="Trusted DWG"><svg width="18" height="18" viewBox="0 0 18 18"><path d="M2 1h8l5 5v8H2Z" fill="#2f6fc0"/><path d="M0 10h7v5H0Z" fill="#f5b92e"/><path d="M0 5h8M4 1v9" stroke="#fff" stroke-width="1.300"/><path d="M7 12l3 4 6-8" fill="none" stroke="#57b559" stroke-width="2.500"/></svg></button>
    <button aria-label="Notification"><svg width="18" height="18" viewBox="0 0 18 18"><path d="M1 1h14v12H1Z" fill="#f4f4f4" stroke="#fff"/><path d="M2 11L5 4l4 5 3-5 3 6" fill="none" stroke="#444" stroke-width="1.500"/><path d="M12 7l6 10H6Z" fill="#ee7830"/><path d="M12 10v4M12 15v1" stroke="#fff"/></svg></button>
  </div>
</footer>
</body>
</html>
```
FILE: styles.css
```css
* { box-sizing: border-box; }
html, body { height: 100%; margin: 0; }
body {
  display: flex; flex-direction: column; overflow: hidden;
  background: #222933; color: #eceef0;
  font: 11px/15px "Open Sans", "Noto Sans", sans-serif;
}
button, select, input { font: inherit; color: inherit; background: none; border: 0; padding: 0; margin: 0; }
button { display: flex; align-items: center; justify-content: center; white-space: nowrap; }
svg { display: block; flex: none; }
h2, p, ul { margin: 0; padding: 0; font: inherit; list-style: none; }
.defs { position: absolute; width: 0; height: 0; }

.titlebar { display: flex; justify-content: space-between; align-items: flex-start; height: 25px; }
.quick { display: flex; gap: 8px; height: 16px; align-items: center; flex: 9; }
.logo { font: bold 18px/18px "Liberation Sans", sans-serif; color: #dd3b44; gap: 7px; margin: 0 11px 0 5px; }
.logo svg { color: #dcdcdc; }
.apptitle { display: flex; gap: 12px; line-height: 18px; }
.winctl { display: flex; gap: 13px; flex: 8; justify-content: flex-end; padding-top: 3px; margin-right: -3px; }

.tabrow { display: flex; align-items: center; height: 20px; padding-left: 4px; color: #dcdcdc; }
.home { width: 51px; height: 20px; background: #3b4453; color: #eceef0; margin-right: 22px; }
.mini { width: 15px; height: 8px; background: #eee; margin-right: 5px; }

.ribbon { display: flex; height: 99px; background: #3b4453; border-left: 1px solid #222933; }
.panel { display: flex; flex-direction: column; flex: none; padding-top: 4px; border-right: 1px solid #222933; }
.panel:last-child { border: 0; }
.body { display: flex; height: 74px; }
.panel h2 { display: flex; align-items: center; justify-content: center; height: 21px; padding-bottom: 1px; }
.p-output h2 span { flex: 1; text-align: center; }
.p-output h2 svg { margin: 2px 5px 0 0; }
.p-files { width: 92px; }
.p-output { width: 128px; }
.p-nav { width: 133px; }
.p-view, .p-layers { width: 205px; }
.p-measure { width: 228px; }
.p-snap { width: 215px; }
.p-ui { width: 355px; }
.p-help { width: 166px; }
.big { position: relative; flex-direction: column; justify-content: flex-start; min-width: 42px; padding-top: 3px; line-height: 15px; }
.big > svg:first-child { margin-bottom: 4px; }
.p-files .big { min-width: 44px; }
.col { display: flex; flex-direction: column; align-items: flex-start; }
.p-output .col { margin-left: 2px; }
.small { height: 24px; gap: 5px; padding-left: 1px; }
.spread { justify-content: space-between; height: 72px; padding-left: 2px; }
.ext { gap: 3px; height: 72px; padding-left: 5px; }
.ext .crt { margin-left: 4px; }
.end { margin-left: auto; width: 34px; }
.p-measure .big { width: 73px; padding-right: 2px; }
.p-measure .big > svg:last-child { margin-top: 2px; }
.p-snap .big { width: 56px; }
.snaps { display: grid; grid-template-columns: 24px 24px 24px 30px; grid-auto-rows: 24px; }
.snaps svg { width: 16px; height: 16px; }
.drop { width: 69px; padding-left: 3px; }
.drop .crt { position: absolute; right: 2px; top: 52px; }
.tog { width: 42px; min-width: 0; padding-top: 3px; background: #475b75; border: 1px solid #6cbcf2; }
.tog.wide { width: 50px; }
.ruled { width: 122px; padding-left: 4px; border-right: 1px solid #222933; margin-bottom: 1px; }

.stack { padding: 0 2px; }
.combo { display: flex; align-items: center; width: 100%; height: 22px; margin: 1px 0 2px; padding: 0 3px 0 2px; background: #4e5a6e; border: 1px solid #2a313d; justify-content: flex-start; }
.combo select { flex: 1; appearance: none; padding: 0 3px; height: 20px; }
.combo .dd { margin-left: auto; color: #dcdcdc; }
.tools { display: flex; align-items: center; height: 24px; padding-left: 4px; gap: 8px; }
.lay { gap: 12px; padding-left: 2px; margin-bottom: 1px; }
.layerbox { position: relative; }
.current { padding: 0 1px 0 5px; gap: 7px; margin: 0; }
.sw { flex: none; width: 14px; height: 14px; border: 1px solid #000; background: #666; }
.white { background: #fff; }
.cyan { background: #0ff; }
.yellow { background: #ff0; }
.blue { background: #0b7ba5; }
.red { background: #f00; }
.gray { background: #848484; }
.green { background: #0f0; }
.layers { position: absolute; z-index: 5; right: 0; top: 22px; width: 438px; padding: 1px 0; background: #4e5a6e; border: 1px solid #1c2129; box-shadow: 4px 4px 4px rgba(0,0,0,.45); color: #c6cad0; }
.layers::after { content: ""; position: absolute; right: 3px; bottom: 2px; width: 6px; height: 203px; border-radius: 2px; background: #2e3641; }
.layers li { position: relative; display: flex; align-items: center; height: 24px; padding-left: 9px; gap: 5px; }
.layers li > svg:first-child { width: 50px; height: 16px; }
.layers li > .sw { margin-left: 1px; }
.layers .own { color: #f4f5f6; }
.layers li span { position: relative; }
.layers .marked span { color: #ee0a92; }
.layers .marker { position: absolute; left: 80px; top: 1px; width: 106px; height: 28px; }
.tip { position: absolute; z-index: 6; left: -107px; bottom: 24px; padding: 7px 9px 7px 6px; white-space: nowrap; color: #111; background: #fdfdfd; border: 1px solid #555; border-radius: 2px; }
.tip::after { content: ""; position: absolute; right: 3px; top: 100%; border: 4px solid transparent; border-top-color: #fdfdfd; border-bottom: 0; }

.doctabs { display: flex; align-items: flex-end; height: 30px; padding-left: 18px; border-bottom: 4px solid #3b4453; }
.dtab { height: 22px; border-radius: 10px 10px 0 0; justify-content: flex-start; }
.start { width: 127px; padding-left: 14px; background: #323a48; color: #b4b9c0; }
.active { width: 128px; gap: 3px; padding: 0 19px 0 10px; background: #3b4453; color: #fff; font-size: 12px; }
.cls { margin-left: auto; color: #a9adb3; }
.plus { width: 21px; height: 14px; margin: 0 0 4px 1px; background: #2c333f; border-radius: 3px 8px 3px 3px; }

.canvas { position: relative; flex: 1; overflow: hidden; background: #212830; isolation: isolate; border-bottom: 1px solid #4a4f56; }
.drawing { position: absolute; width: 100%; height: 100%; isolation: isolate; background: #212830; }
.ink { mix-blend-mode: darken; fill: #880090; }
.docctl { position: absolute; right: 0; top: 9px; display: flex; gap: 9px; }
.viewcube { position: absolute; right: 4px; top: 30px; width: 140px; height: 156px; }
.pts { font: bold 22px "Liberation Sans", sans-serif; fill: #b0b3b6; }
.top { font: bold 12px "Open Sans", sans-serif; fill: #4b5257; }
.wcs { position: absolute; right: 50px; top: 193px; width: 48px; height: 18px; gap: 6px; border: 1px solid #777b88; border-radius: 5px; background: #9698a6; color: #50535c; font-family: "Liberation Sans", sans-serif; }
.navbar { position: absolute; right: -1px; top: 236px; width: 28px; height: 212px; background: #5c6166; border-radius: 4px 0 0 4px; box-shadow: 0 0 0 1px #191e24; overflow: hidden; }
.cmd { position: absolute; left: 389px; right: 381px; bottom: 0; }
.hist { display: flex; flex-direction: column; align-items: flex-start; gap: 5px; padding: 0 0 3px 74px; font: 12px/15px "DejaVu Sans Mono", monospace; color: #fff; }
.hist p { background: #5d5e5f; border-radius: 2px; padding: 0 1px; white-space: nowrap; }
.hist .old { color: #b4b5b6; background: #515355; }
.hist .mid { color: #e4e4e4; background: #58595a; }
.cmdbar { display: flex; height: 26px; }
.grip { display: flex; align-items: center; gap: 5px; width: 56px; padding-left: 4px; background: #282d3a; color: #b5b5b5; }
.grip button:last-child { margin-left: 5px; }
.entry { display: flex; align-items: center; gap: 3px; flex: 1; padding: 0 4px; margin-bottom: 1px; background: #babcbd; color: #444; border-radius: 0 2px 2px 0; }
.entry input { flex: 1; height: 100%; outline: 0; }

.status { display: flex; height: 25px; }
.ltabs { display: flex; align-items: flex-start; flex: 1; padding-left: 11px; }
.ltabs button { height: 17px; padding: 0 11px; border-radius: 0 0 6px 6px; color: #b4b9c0; background: #2a313d; margin-right: 3px; }
.ltabs .sel { font-weight: bold; color: #fff; background: #3b4453; }
.coords { display: flex; align-items: center; justify-content: flex-end; width: 210px; margin-top: 1px; padding-right: 5px; background: #3b4453; font-size: 12px; color: #fff; }
.hw { width: 22px; height: 22px; margin: 2px 4px; background: #5a8cc4; }
.tray { display: flex; gap: 8px; width: 48px; margin-top: 1px; padding-left: 3px; background: #3b4453; }
```
